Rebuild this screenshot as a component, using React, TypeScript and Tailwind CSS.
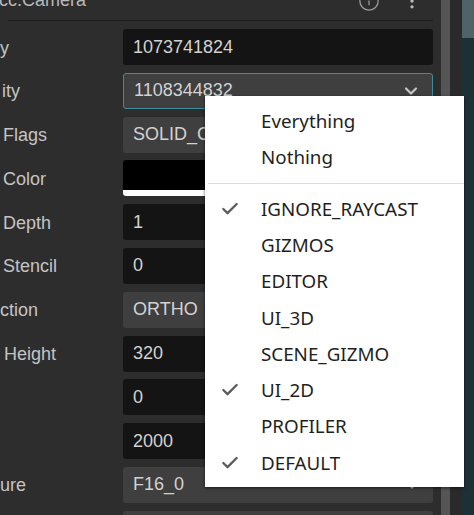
import { Check, ChevronDown, EllipsisVertical, Info } from 'lucide-react';

const font = "font-['Liberation_Sans',Arial,sans-serif]";

type Row = { label: string; indent?: string; value?: string; kind: 'input' | 'select' | 'color' | 'focus' };

const rows: Row[] = [
  { label: 'y', value: '1073741824', kind: 'input' },
  { label: 'ity', indent: 'pl-[2px]', value: '1108344832', kind: 'focus' },
  { label: 'Flags', indent: 'pl-[3px]', value: 'SOLID_COLOR', kind: 'select' },
  { label: 'Color', indent: 'pl-[3px]', kind: 'color' },
  { label: 'Depth', indent: 'pl-[3px]', value: '1', kind: 'input' },
  { label: 'Stencil', indent: 'pl-[3px]', value: '0', kind: 'input' },
  { label: 'ction', value: 'ORTHO', kind: 'select' },
  { label: 'Height', indent: 'pl-[4px]', value: '320', kind: 'input' },
  { label: '', value: '0', kind: 'input' },
  { label: '', value: '2000', kind: 'input' },
  { label: 'ure', value: 'F16_0', kind: 'select' },
  { label: '', value: '', kind: 'select' },
];

const menuTop = ['Everything', 'Nothing'];
const layers = [
  { name: 'IGNORE_RAYCAST', on: true },
  { name: 'GIZMOS', on: false },
  { name: 'EDITOR', on: false },
  { name: 'UI_3D', on: false },
  { name: 'SCENE_GIZMO', on: false },
  { name: 'UI_2D', on: true },
  { name: 'PROFILER', on: false },
  { name: 'DEFAULT', on: true },
];

function Field({ row }: { row: Row }) {
  if (row.kind === 'color') {
    return (
      <div className="h-[36px] flex-1 overflow-hidden rounded-[3px] bg-black">
        <div className="mt-[30px] h-[6px] bg-white" />
      </div>
    );
  }
  const bg =
    row.kind === 'input'
      ? 'bg-[#141414]'
      : row.kind === 'focus'
        ? 'border border-[#3f8d98] bg-[#3f3f3f]'
        : 'bg-[#3f3f3f]';
  return (
    <div className={`flex h-[36px] flex-1 items-center justify-between rounded-[3px] pl-[10px] pr-[11px] text-[18px] text-[#d2d2d2] ${bg}`}>
      <span>{row.value}</span>
      {row.kind !== 'input' && <ChevronDown className="h-5 w-5 text-[#c8c8c8]" strokeWidth={2.6} />}
    </div>
  );
}

function MenuItem({ name, on }: { name: string; on?: boolean }) {
  return (
    <div className="flex h-[36.3px] items-center text-[#1f1f1f]">
      <span className="mr-[6px] flex w-[50px] justify-center">
        {on && <Check className="h-[20px] w-[20px] text-[#5c5c5c]" strokeWidth={2.8} />}
      </span>
      <span>{name}</span>
    </div>
  );
}

export default function App() {
  return (
    <div className={`relative flex h-[515px] w-[474px] overflow-hidden bg-[#2d2d2d] ${font}`}>
      <div className="w-[441px] shrink-0">
        <div className="mx-[8px] flex h-[21px] items-end justify-between border-b border-[#1c1c1c] pb-[1px] text-[#c8c8c8]">
          <span className="-ml-[9px] mt-[-3px] self-start text-[18px] leading-[6px] opacity-90">cc.Camera</span>
          <span className="flex items-center gap-[22px] pr-[11px] -translate-y-[7px]">
            <Info className="h-[22px] w-[22px] text-[#9a9a9a]" strokeWidth={1.4} />
            <EllipsisVertical className="h-[20px] w-[20px] text-[#b8b8b8]" />
          </span>
        </div>
        <div className="flex flex-col gap-[7.8px] pt-[8px]">
          {rows.map((row, i) => (
            <div key={i} className="flex items-center pr-[8px]">
              <div className="w-[123px] shrink-0 translate-y-[1px] text-[18px] text-[#c4c4c4]">
                <span className={row.indent}>{row.label}</span>
              </div>
              <Field row={row} />
            </div>
          ))}
        </div>
      </div>
      <div className="w-[9px] shrink-0 bg-[#555555]" />
      <div className="w-[12px] shrink-0 bg-[#2a2a2a]" />
      <div className="flex flex-1 flex-col bg-[#1c3136]">
        <div className="h-[38px] bg-[#4f6468]" />
      </div>

      <div className="absolute left-[205px] top-[96px] w-[259px] bg-white pb-[6px] pt-[7px] text-[18.8px] shadow-[0_1px_3px_rgba(0,0,0,0.6)] font-['Noto_Sans',sans-serif]">
        {menuTop.map((name) => (
          <MenuItem key={name} name={name} />
        ))}
        <div className="mb-[7px] ml-[3px] mt-[7px] h-px bg-[#dcdcdc]" />
        {layers.map((item) => (
          <MenuItem key={item.name} name={item.name} on={item.on} />
        ))}
      </div>
    </div>
  );
}
